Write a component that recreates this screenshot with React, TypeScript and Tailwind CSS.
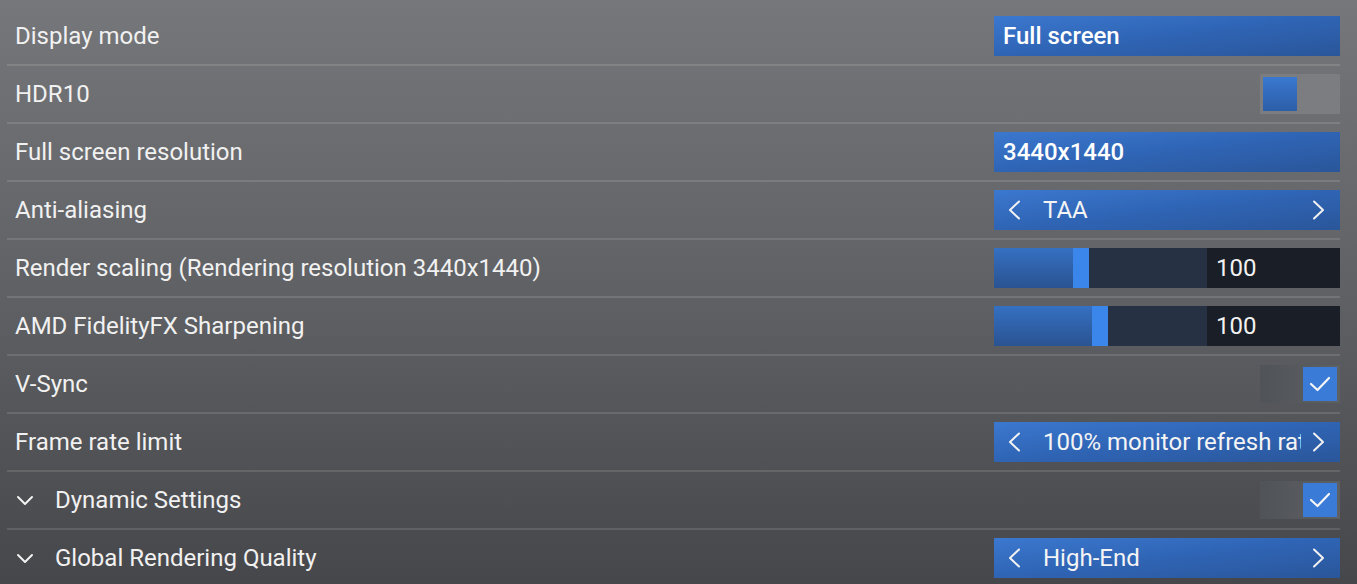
import type { ReactNode } from 'react';

const blueBox = 'bg-gradient-to-br from-[#3b78cf] via-[#2f64b4] to-[#2a569a]';

function Chevron({ dir }: { dir: 'left' | 'right' | 'down' }) {
  const d = dir === 'left' ? 'M12 1.5 L3 10 L12 18.5' : dir === 'right' ? 'M2 1.5 L11 10 L2 18.5' : 'M2 4 L9 11 L16 4';
  const w = dir === 'down' ? 18 : 14;
  const h = dir === 'down' ? 14 : 20;
  return (
    <svg width={w} height={h} viewBox={`0 0 ${w} ${h}`} className="shrink-0">
      <path d={d} fill="none" stroke="#f2f2f2" strokeWidth="2" strokeLinecap="round" strokeLinejoin="round" />
    </svg>
  );
}

function Row({ label, expand, children }: { label: string; expand?: boolean; children: ReactNode }) {
  return (
    <div className="border-b-2 border-white/[0.12]">
      <div className="flex h-[56px] items-center justify-between">
        <div className="flex items-center pl-2 text-[24px] text-[#f1f1f1]">
          {expand && (
            <span className="ml-[1px] mr-[21px] flex items-center">
              <Chevron dir="down" />
            </span>
          )}
          {label}
        </div>
        {children}
      </div>
    </div>
  );
}

function TextBox({ value }: { value: string }) {
  return (
    <div className={`flex h-[40px] w-[346px] items-center px-[9px] text-[24px] font-medium text-white ${blueBox}`}>{value}</div>
  );
}

function Selector({ value }: { value: string }) {
  return (
    <div className={`flex h-[40px] w-[346px] items-center pl-[13px] pr-[14px] text-[24px] text-[#f4f4f4] ${blueBox}`}>
      <Chevron dir="left" />
      <span className="ml-[22px] flex-1 overflow-hidden whitespace-nowrap">{value}</span>
      <span className="ml-[11px] flex items-center">
        <Chevron dir="right" />
      </span>
    </div>
  );
}

function Slider({ fill }: { fill: number }) {
  return (
    <div className="flex h-[40px] w-[346px]">
      <div className="flex w-[213px] bg-[#263244]">
        <div className="h-full bg-gradient-to-b from-[#3570c2] to-[#2a5391]" style={{ width: fill }} />
        <div className="h-full w-[16px] bg-[#3b86ea]" />
      </div>
      <div className="flex flex-1 items-center bg-[#1a1e27] pl-[9px] text-[24px] text-[#f1f1f1]">100</div>
    </div>
  );
}

function Toggle() {
  return (
    <div className="flex h-[40px] w-[80px] items-center bg-[#7b7d80] p-[3px]">
      <div className="h-[34px] w-[34px] bg-gradient-to-b from-[#3a78d0] to-[#2c5ea8]" />
    </div>
  );
}

function Check() {
  return (
    <div className="flex h-[38px] w-[80px] items-center justify-end bg-gradient-to-r from-[#505357] to-[#5e6064] p-[3px]">
      <div className="flex h-[34px] w-[34px] items-center justify-center bg-[#3a7bd8]">
        <svg width="24" height="20" viewBox="0 0 24 20">
          <path d="M3 10 L9.5 16 L21 4" fill="none" stroke="#f5f5f5" strokeWidth="2.2" strokeLinecap="round" strokeLinejoin="round" />
        </svg>
      </div>
    </div>
  );
}

export default function App() {
  return (
    <div
      className="h-[584px] w-[1357px] overflow-hidden bg-gradient-to-b from-[#75777a] via-[#5f6164] to-[#46474a] pl-[7px] pr-[17px] pt-[8px]"
      style={{ fontFamily: 'Roboto, "Liberation Sans", sans-serif' }}
    >
      <Row label="Display mode"><TextBox value="Full screen" /></Row>
      <Row label="HDR10"><Toggle /></Row>
      <Row label="Full screen resolution"><TextBox value="3440x1440" /></Row>
      <Row label="Anti-aliasing"><Selector value="TAA" /></Row>
      <Row label="Render scaling (Rendering resolution 3440x1440)"><Slider fill={79} /></Row>
      <Row label="AMD FidelityFX Sharpening"><Slider fill={98} /></Row>
      <Row label="V-Sync"><Check /></Row>
      <Row label="Frame rate limit"><Selector value="100% monitor refresh rate" /></Row>
      <Row label="Dynamic Settings" expand><Check /></Row>
      <Row label="Global Rendering Quality" expand><Selector value="High-End" /></Row>
    </div>
  );
}
